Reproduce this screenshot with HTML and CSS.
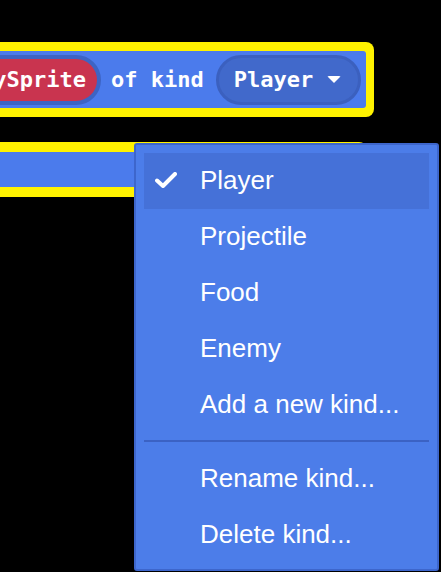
FILE: index.html
```html
<!DOCTYPE html>
<html lang="en">
<head>
  <meta charset="UTF-8">
  <meta name="viewport" content="width=device-width, initial-scale=1.0">
  <title>Sprite kind dropdown</title>
  <link rel="stylesheet" href="styles.css">
</head>
<body>

  <div class="workspace">
    <!-- selected block -->
    <div class="block-outline first">
      <div class="block">
        <span class="reporter">mySprite</span>
        <span class="label">of kind</span>
        <span class="dropdown">Player <span class="caret"></span></span>
      </div>
    </div>

    <div class="block-outline second">
      <div class="block empty"></div>
    </div>

    <!-- dropdown menu opened over the blocks -->
    <div class="menu">
      <div class="menu-item selected">
        <svg class="check" width="24" height="16" viewBox="0 0 24 16">
          <polyline points="3,8.5 9,14 21,2" fill="none" stroke="#fff" stroke-width="4" stroke-linecap="round" stroke-linejoin="round"/>
        </svg>
        Player
      </div>
      <div class="menu-item">Projectile</div>
      <div class="menu-item">Food</div>
      <div class="menu-item">Enemy</div>
      <div class="menu-item">Add a new kind...</div>
      <div class="menu-sep"></div>
      <div class="menu-item">Rename kind...</div>
      <div class="menu-item">Delete kind...</div>
    </div>
  </div>

</body>
</html>
```

FILE: styles.css
```css
body {
  margin: 0;
  background-color: #000;
  height: 572px;
  overflow: hidden;
}

.workspace {
  position: relative;
  height: 572px;
  padding-top: 42px;
  box-sizing: border-box;
}

.block-outline {
  background-color: #fff200;
  padding: 9px 8px 9px 0;
  border-radius: 0 8px 8px 0;
}

.block-outline.first {
  width: 366px;
}

.block-outline.second {
  width: 359px;
  margin-top: 25px;
  padding: 10px 8px 10px 0;
}

.block {
  background-color: #4b7bec;
  display: flex;
  align-items: center;
  height: 57px;
  border-radius: 0 3px 3px 0;
  font-family: "DejaVu Sans Mono", "Liberation Mono", monospace;
  font-weight: bold;
  font-size: 22px;
  color: #fff;
}

.block.empty {
  height: 35px;
}

.reporter {
  background-color: #c9344f;
  border: 4px solid #3d64c4;
  border-radius: 25px;
  height: 42px;
  line-height: 42px;
  padding: 0 11px 0 14px;
  margin-left: -38px;
  white-space: nowrap;
}

.label {
  margin-left: 10px;
  white-space: nowrap;
}

.dropdown {
  margin-left: 12px;
  background-color: #4169cb;
  border: 3px solid #3b60bf;
  border-radius: 25px;
  height: 44px;
  line-height: 44px;
  padding: 0 17px 0 15px;
  display: flex;
  align-items: center;
  white-space: nowrap;
}

.caret {
  display: inline-block;
  margin-left: 14px;
  width: 0;
  height: 0;
  border-left: 7px solid transparent;
  border-right: 7px solid transparent;
  border-top: 7px solid #fff;
  border-radius: 2px;
}

.menu {
  position: absolute;
  left: 134px;
  top: 143px;
  width: 305px;
  height: 428px;
  box-sizing: border-box;
  padding: 8px 8px 8px 8px;
  background-color: #4c7de9;
  border: 2px solid #3d66cc;
  border-radius: 3px;
  font-family: "Liberation Sans", Arial, sans-serif;
  font-size: 26px;
  color: #fff;
}

.menu-item {
  position: relative;
  height: 56px;
  line-height: 54px;
  padding-left: 56px;
  white-space: nowrap;
}

.menu-item.selected {
  background-color: #4571d8;
}

.check {
  position: absolute;
  left: 10px;
  top: 19px;
  filter: blur(0.4px);
}

.menu-sep {
  height: 2px;
  margin: 7px 0 9px;
  background-color: #3b62c4;
}
```
